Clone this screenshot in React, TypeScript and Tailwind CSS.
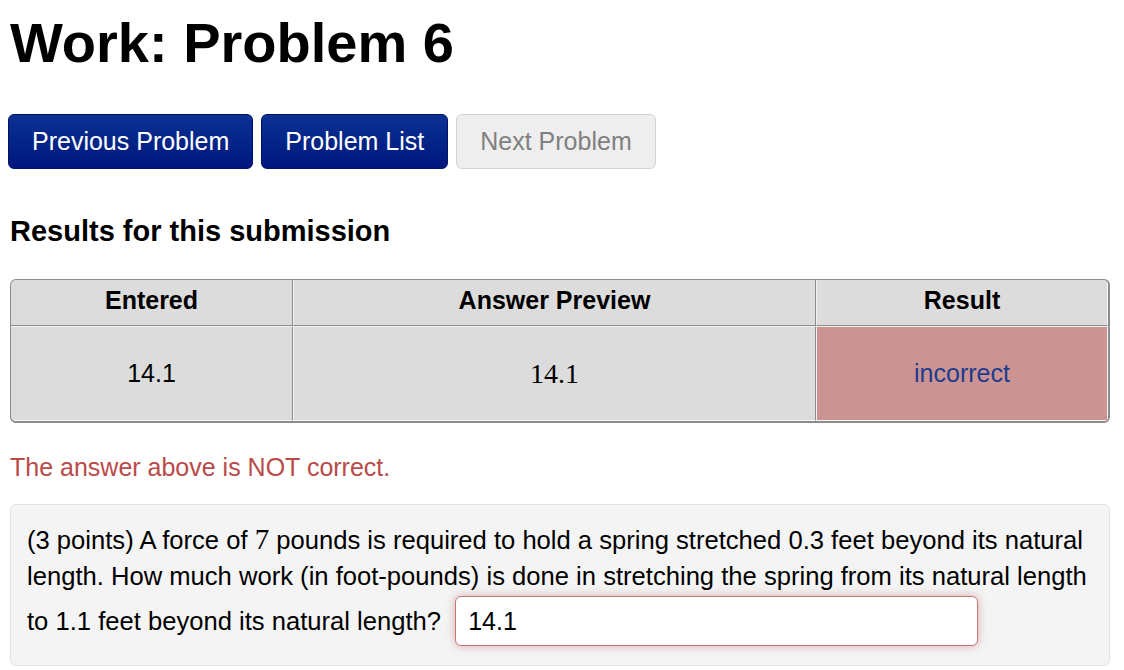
import React from 'react';
import clsx from 'clsx';

type NavButtonProps = {
  label: string;
  disabled?: boolean;
};

// Bootstrap-style nav button; the disabled one is flat grey
const NavButton = ({ label, disabled }: NavButtonProps) => (
  <button
    type="button"
    className={clsx(
      'h-[55px] rounded-[6px] border px-[23px] text-[25px] leading-none',
      disabled
        ? 'border-[#d4d4d4] bg-[#eeeeee] text-[#808080]'
        : 'border-[#00126a] bg-linear-to-b from-[#0d3192] to-[#00167e] text-white',
    )}
  >
    {label}
  </button>
);

const mathFont = "font-['Liberation_Serif','Times_New_Roman',serif]";

export default function App() {
  return (
    <div className="min-h-[670px] bg-white px-[10px] pt-[11px] font-['Liberation_Sans',Arial,sans-serif] text-black">
      <h1 className="text-[56px] font-bold leading-[64px]">Work: Problem 6</h1>

      {/* Problem navigation */}
      <div className="-ml-[2px] mt-[39px] flex gap-2">
        <NavButton label="Previous Problem" />
        <NavButton label="Problem List" />
        <NavButton label="Next Problem" disabled />
      </div>

      <h2 className="mt-[45px] text-[29px] font-bold leading-[34px]">Results for this submission</h2>

      {/* Submission results table */}
      <div className="mt-[31px] w-[1100px] overflow-hidden rounded-[6px] border-t border-l border-r-2 border-b-2 border-[#8c8c8c] bg-[#dcdcdc] text-[25px]">
        <div className="grid grid-cols-[282px_523px_1fr] font-bold">
          <div className="flex h-[46px] items-center justify-center border-r border-b border-[#8c8c8c] pb-[4px]">Entered</div>
          <div className="flex h-[46px] items-center justify-center border-l border-l-[#f2f2f2] border-r border-b border-[#8c8c8c] pb-[4px]">
            Answer Preview
          </div>
          <div className="flex h-[46px] items-center justify-center border-l border-l-[#f2f2f2] border-r border-r-[#f7f7f7] border-b border-b-[#8c8c8c] pb-[4px]">
            Result
          </div>
        </div>
        <div className="grid grid-cols-[282px_523px_1fr]">
          <div className="flex h-[95px] items-center justify-center border-t border-t-[#f2f2f2] border-r border-r-[#8c8c8c] border-b border-b-[#f7f7f7]">
            14.1
          </div>
          <div
            className={clsx(
              'flex h-[95px] items-center justify-center border-t border-t-[#f2f2f2] border-l border-l-[#f2f2f2] border-r border-r-[#8c8c8c] border-b border-b-[#f7f7f7] text-[28px]',
              mathFont,
            )}
          >
            14.1
          </div>
          <div className="flex h-[95px] items-center justify-center border-t border-t-[#f2f2f2] border-l border-l-[#f2f2f2] border-r border-r-[#f7f7f7] border-b border-b-[#f7f7f7] bg-[#cc9393] text-[#1c3c8e]">
            incorrect
          </div>
        </div>
      </div>

      <p className="mt-[29px] text-[25px] leading-[30px] text-[#b94a48]">The answer above is NOT correct.</p>

      {/* Problem statement with answer field */}
      <div className="mt-[22px] w-[1100px] rounded-[6px] border border-[#e3e3e3] bg-[#f4f4f4] px-[16px] pt-[17px] pb-[17px] text-[25.6px] leading-[36px]">
        (3 points) A force of <span className={clsx('text-[29px] leading-none', mathFont)}>7</span> pounds is required
        to hold a spring stretched 0.3 feet beyond its natural length. How much work (in foot-pounds) is done in
        stretching the spring from its natural length to 1.1 feet beyond its natural length?{' '}
        <input
          type="text"
          defaultValue="14.1"
          className="my-[2px] ml-[7px] h-[50px] w-[523px] rounded-[6px] border border-[#c47878] bg-white px-[12px] text-[25px] text-black shadow-[0_0_8px_rgba(195,95,95,0.5)] outline-none"
        />
      </div>
    </div>
  );
}
